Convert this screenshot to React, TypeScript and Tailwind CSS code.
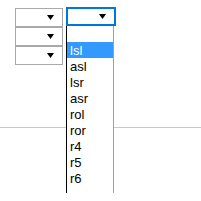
const options = ['lsl', 'asl', 'lsr', 'asr', 'rol', 'ror', 'r4', 'r5', 'r6'];

const Arrow = () => (
  <svg width="7" height="5" viewBox="0 0 7 5" className="block">
    <path d="M0 0H7L3.5 5Z" fill="#000" />
  </svg>
);

const ClosedSelect = () => (
  <div className="flex h-[19px] w-[48px] items-center justify-end border border-[#a9a9a9] bg-white pr-[8px]">
    <Arrow />
  </div>
);

export default function App() {
  return (
    <div className="h-[201px] w-[201px] overflow-hidden bg-white font-['Liberation_Sans',Arial,sans-serif] text-[13px] leading-none text-black">
      <div className="flex items-start gap-[3px] pl-[15px] pt-2">
        <div className="flex flex-col">
          <ClosedSelect />
          <ClosedSelect />
          <ClosedSelect />
        </div>
        <div className="relative -mt-px">
          <div className="flex h-[19px] w-[50px] items-center justify-end border-2 border-[#0078d7] bg-white pr-[8px]">
            <Arrow />
          </div>
          <div className="absolute left-0 top-[19px] z-10 flex h-[167px] w-[48px] flex-col border-l border-r border-l-black border-r-[#7ea6e0] bg-white">
            <div className="h-4" />
            {options.map((o, i) => (
              <div
                key={o}
                className={`flex h-4 items-center pl-[3px] ${i === 0 ? 'bg-[#3399ff] text-white' : ''}`}
              >
                {o}
              </div>
            ))}
          </div>
        </div>
      </div>
      <div className="mt-[62px] h-px bg-[#c8c8c8]" />
    </div>
  );
}
